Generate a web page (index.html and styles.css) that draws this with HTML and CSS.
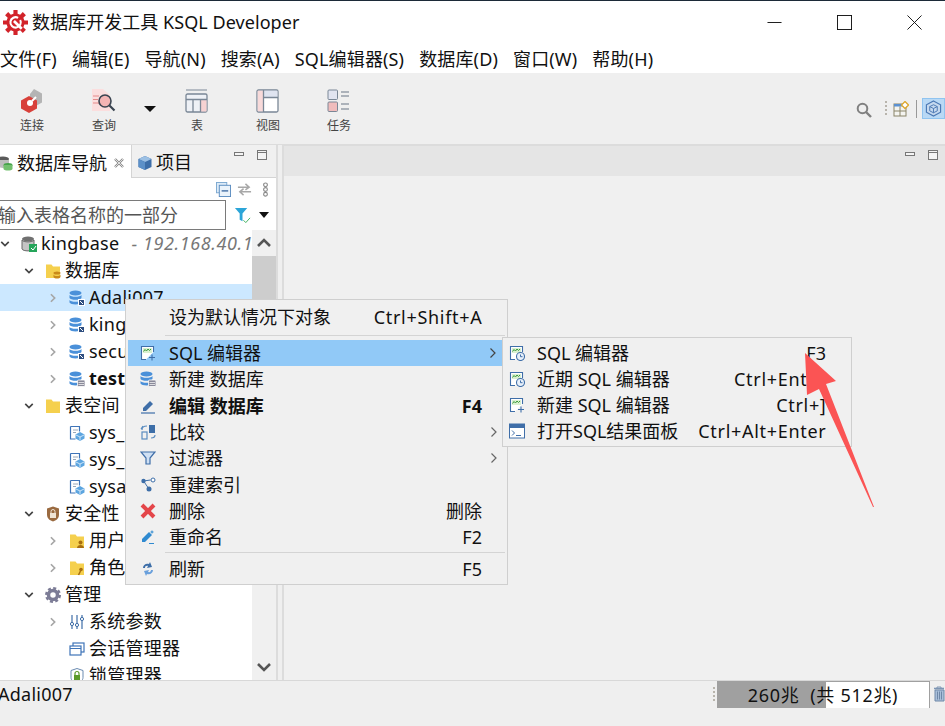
FILE: index.html
```html
<!DOCTYPE html>
<html lang="zh-CN">
<head>
<meta charset="utf-8">
<title>数据库开发工具 KSQL Developer</title>
<link rel="stylesheet" href="styles.css">
</head>
<body>
<svg class="defs" width="0" height="0" aria-hidden="true">
  <defs>
    <symbol id="db" viewBox="0 0 16 16">
      <ellipse cx="6.5" cy="3" rx="6" ry="2.4" fill="#4a90d9"/>
      <path d="M.5 5c1 2.4 11 2.4 12 0v3c-1 2.4-11 2.4-12 0z" fill="#4a90d9"/>
      <path d="M.5 10c1 2.4 11 2.4 12 0v2.5c-1 2.6-11 2.6-12 0z" fill="#4a90d9"/>
    </symbol>
    <symbol id="dbbadge" viewBox="0 0 16 16">
      <use href="#db"/>
      <rect x="9" y="9" width="7" height="7" fill="#fff"/>
      <path d="M10 10h5v5h-5z" fill="#2f4f80"/>
      <path d="M11 11l3 3" stroke="#fff" fill="none"/>
    </symbol>
    <symbol id="dbgray" viewBox="0 0 16 16">
      <use href="#db"/>
      <rect x="8.500" y="9" width="7.500" height="6.500" rx="1" fill="#8a8a9a" stroke="#fff" stroke-width=".8"/>
      <path d="M9.500 11.500h5.500M9.500 13.500h5.500" stroke="#fff" stroke-width=".7"/>
    </symbol>
    <symbol id="leaf" viewBox="0 0 16 16">
      <path d="M1.500 1.500h9v5M1.500 1.500v12.500h5" fill="#fff" stroke="#3f74b8" stroke-width="1.200"/>
      <path d="M4 5h5M4 7.500h3" stroke="#9aa8b8"/>
      <path d="M11 7l4.500 2.500v4L11 16l-4.500-2.500v-4z" fill="#5ca5e0"/>
      <path d="M7 10l4 2 4-2M11 12v3.500" stroke="#fff" stroke-width=".7" fill="none"/>
    </symbol>
    <symbol id="folder" viewBox="0 0 16 16">
      <path d="M1 1.500h5.500l1.500 2h7v11.500H1z" fill="#f5d04e"/>
    </symbol>
    <symbol id="chev-r" viewBox="0 0 12 12">
      <path d="M3.500 1.500L8 6l-4.500 4.500" fill="none" stroke="#a6a6a6" stroke-width="2"/>
    </symbol>
    <symbol id="chev-d" viewBox="0 0 12 12">
      <path d="M1.500 3.500L6 8l4.500-4.500" fill="none" stroke="#444" stroke-width="2"/>
    </symbol>
    <symbol id="sqlicon" viewBox="0 0 16 16">
      <path d="M6 14.500H1.500v-13h12V7" fill="#fff" stroke="#3f6ea8" stroke-width="1.100"/>
      <rect x="3" y="3" width="9" height="5" fill="#d9f0d0"/>
      <path d="M3.500 6.500l1.500-2 1.500 1.500 1.500-2 1.500 1.500 1.500-1.500" fill="none" stroke="#3c9a3c" stroke-width="1"/>
    </symbol>
    <symbol id="sqlplus" viewBox="0 0 16 16">
      <use href="#sqlicon"/>
      <path d="M9 12.500h6M12 9.500v6" stroke="#3f6ea8" stroke-width="1.100"/>
    </symbol>
    <symbol id="sqlclock" viewBox="0 0 16 16">
      <use href="#sqlicon"/>
      <circle cx="11.500" cy="11.500" r="4" fill="#e8f0fa" stroke="#3f6ea8" stroke-width="1.100"/>
      <path d="M11.500 9.500v2.200h2" fill="none" stroke="#3f6ea8"/>
    </symbol>
    <symbol id="min" viewBox="0 0 12 12">
      <rect x="1.500" y="3.500" width="9" height="3" fill="#f4f4f4" stroke="#777"/>
    </symbol>
    <symbol id="max" viewBox="0 0 12 12">
      <rect x="1.500" y="1.500" width="9" height="9" fill="#f4f4f4" stroke="#777"/>
      <path d="M1.500 3.500h9" stroke="#777"/>
    </symbol>
  </defs>
</svg>

<div class="app">
  <div class="topline"></div>

  <header class="titlebar">
    <svg class="logo" viewBox="0 0 24 24">
      <path d="M10 0h4v3.500l2.500 1 2.500-2.500 3 3-2.500 2.500 1 2.500H24v4h-3.500l-1 2.500 2.500 2.500-3 3-2.500-2.500-2.500 1V24h-4v-3.500l-2.500-1L5 22l-3-3 2.500-2.500-1-2.500H0v-4h3.500l1-2.500L2 5l3-3 2.500 2.500 2.500-1z" fill="#d2232a"/>
      <path d="M14.500 7.500a5 5 0 1 0 2 2" fill="none" stroke="#fff" stroke-width="2"/>
      <path d="M10.500 10.500L18 18" stroke="#fff" stroke-width="2.600"/>
    </svg>
    <span class="apptitle">数据库开发工具 KSQL Developer</span>
    <div class="winctl">
      <svg class="winbtn" viewBox="0 0 16 16"><path d="M.5 8h15" stroke="#111" stroke-width="1" fill="none"/></svg>
      <svg class="winbtn" viewBox="0 0 16 16"><rect x=".5" y=".5" width="15" height="15" fill="none" stroke="#111"/></svg>
      <svg class="winbtn" viewBox="0 0 16 16"><path d="M.5.500l15 15M15.500.500l-15 15" stroke="#111" fill="none"/></svg>
    </div>
  </header>

  <nav class="menubar">
    <span>文件(F)</span><span>编辑(E)</span><span>导航(N)</span><span>搜索(A)</span><span>SQL编辑器(S)</span><span>数据库(D)</span><span>窗口(W)</span><span>帮助(H)</span>
  </nav>

  <div class="toolbar">
    <div class="tool t-connect">
      <svg class="tico" viewBox="0 0 24 24">
        <path d="M14 0l8 4.500v9l-8 4.500-4-2V5z" fill="#b4b4b4"/>
        <path d="M9 7l8 4.500v8L9 24l-8-4.500v-8z" fill="#d8403a"/>
        <circle cx="10" cy="14" r="3" fill="#fff"/>
        <path d="M12 12l4-4" stroke="#fff" stroke-width="2"/>
      </svg>
      <span class="tlabel">连接</span>
    </div>
    <div class="tool t-query">
      <svg class="tico" viewBox="0 0 24 24">
        <path d="M0 0h11l7 6v16H0z" fill="#fbdede"/>
        <path d="M1 7h6M1 10.500h5M1 14h6" stroke="#e58a8a" stroke-width="1.200"/>
        <circle cx="13" cy="12" r="6" fill="#f4b4b4" stroke="#3a4450" stroke-width="1.600"/>
        <path d="M17.500 16.500L22.500 21.500" stroke="#3a4450" stroke-width="2.200"/>
      </svg>
      <span class="tlabel">查询</span>
    </div>
    <div class="tdrop"></div>
    <div class="tool t-table">
      <svg class="tico" viewBox="0 0 24 24">
        <path d="M1 1h21" stroke="#7a8796"/>
        <rect x="1" y="5" width="21" height="18" rx="1.500" fill="#eef1f6" stroke="#7a8796" stroke-width="1.300"/>
        <rect x="16" y="11" width="5.500" height="11.500" fill="#f6d2d2"/>
        <path d="M1 10.500h21M8 10.500V23M15.500 10.500V23" stroke="#7a8796" stroke-width="1.300"/>
      </svg>
      <span class="tlabel">表</span>
    </div>
    <div class="tool t-view">
      <svg class="tico" viewBox="0 0 24 24">
        <rect x="1" y="1" width="21" height="22" rx="1.500" fill="#fff" stroke="#7a8796" stroke-width="1.300"/>
        <rect x="1.700" y="1.700" width="5.500" height="20.600" fill="#f8dada"/>
        <rect x="8" y="1.700" width="13.400" height="6.500" fill="#dfe4f0"/>
        <path d="M7.500 1v22M8 8.500h14" stroke="#7a8796" stroke-width="1.300"/>
      </svg>
      <span class="tlabel">视图</span>
    </div>
    <div class="tool t-task">
      <svg class="tico" viewBox="0 0 24 24">
        <rect x="1" y="1" width="9.500" height="9.500" rx="1" fill="#e1e4f0" stroke="#7a8796"/>
        <rect x="1" y="13" width="9.500" height="9.500" rx="1" fill="#f0bcbc" stroke="#7a8796"/>
        <path d="M14 3h8M14 7h8M14 15h8M14 20h8" stroke="#6a7686" stroke-width="1.200"/>
      </svg>
      <span class="tlabel">任务</span>
    </div>
    <div class="tright">
      <svg class="ts" viewBox="0 0 16 16"><circle cx="6.500" cy="6.500" r="4.800" fill="none" stroke="#808080" stroke-width="2"/><path d="M10 10l5 5" stroke="#808080" stroke-width="2.400"/></svg>
      <div class="grip"></div>
      <svg class="ts2" viewBox="0 0 16 16"><rect x="1" y="3" width="12" height="12" fill="#f4f4f0" stroke="#8a8468"/><path d="M1 3h12v2.500H1z" fill="#5b90d0"/><path d="M7 5.500V15M1 10h12" stroke="#8a8468"/><path d="M12 .500l3.500 3.500-3.500 3.500L8.500 4z" fill="#fff" stroke="#dda72e" stroke-width="1.300"/></svg>
      <div class="tsep"></div>
      <div class="persp">
        <svg class="ts3" viewBox="0 0 18 18"><path d="M9 1l7.500 4v8L9 17l-7.500-4V5z" fill="#c4d8ee" stroke="#4a78b4" stroke-width="1.200"/><path d="M9 5l4 2v4.500L9 13.500l-4-2V7zM5 7l4 2 4-2M9 9v4.500" fill="none" stroke="#4a78b4"/></svg>
      </div>
    </div>
  </div>

  <div class="workarea">
    <section class="navpanel">
      <div class="tabs">
        <div class="tab active">
          <svg class="i16 tabdb" viewBox="0 0 16 16"><ellipse cx="6" cy="4" rx="6" ry="2.500" fill="#5a5a5a"/><path d="M0 5v6c1 2.500 11 2.500 12 0V5" fill="#bdbdbd"/><ellipse cx="11" cy="10" rx="4.500" ry="2" fill="#46a34a"/><path d="M6.500 10v4c1 2 8 2 9 0v-4" fill="#72c06e"/></svg>
          <span>数据库导航</span>
          <svg class="tabx" viewBox="0 0 10 10"><path d="M1 1l8 8M9 1l-8 8" stroke="#8a8a8a" stroke-width="2.400"/><path d="M1 1l8 8M9 1l-8 8" stroke="#f4f4f4" stroke-width=".8"/></svg>
        </div>
        <div class="tab inactive">
          <svg class="i16" viewBox="0 0 16 16"><path d="M8 1l6.500 3v8L8 15l-6.500-3V4z" fill="#3d6ea8"/><path d="M8 1l6.500 3L8 7 1.500 4z" fill="#9cc0e4"/><path d="M8 7v8L1.500 12V4z" fill="#5c90c8"/></svg>
          <span>项目</span>
          <div class="tabctl">
            <svg class="i12"><use href="#min"/></svg>
            <svg class="i12"><use href="#max"/></svg>
          </div>
        </div>
      </div>

      <div class="navbody">
        <div class="navactions">
          <svg class="i16" viewBox="0 0 16 16"><rect x=".5" y=".5" width="11" height="11" fill="#dcebf8" stroke="#7ba7d0"/><rect x="3.500" y="3.500" width="12" height="12" fill="#eaf3fb" stroke="#5a8cc0"/><path d="M6 9.500h7" stroke="#2a5a98" stroke-width="1.300"/></svg>
          <svg class="i16" viewBox="0 0 16 16"><path d="M1 5.500h11M9 2l4 3.500-4 3M15 10.500H4M7 7l-4 3.500 4 3.500" fill="none" stroke="#a8a8a8" stroke-width="1.600"/></svg>
          <svg class="i16" viewBox="0 0 16 16"><circle cx="8" cy="3" r="2" fill="#fff" stroke="#8a8a8a" stroke-width="1.200"/><circle cx="8" cy="8" r="2" fill="#fff" stroke="#8a8a8a" stroke-width="1.200"/><circle cx="8" cy="13" r="2" fill="#fff" stroke="#8a8a8a" stroke-width="1.200"/></svg>
        </div>
        <div class="filterrow">
          <div class="filterinput">输入表格名称的一部分</div>
          <svg class="fico" viewBox="0 0 18 18"><path d="M1 1h13l-5 6v8l-3-1.500V7z" fill="#2ca5d8"/><path d="M10 14l2.500 2.500L17 11.500" fill="none" stroke="#3dae5a"/></svg>
          <div class="fdrop"></div>
        </div>

        <div class="treewrap">
          <div class="tree">
            <div class="row l0"><svg class="chev"><use href="#chev-d"/></svg><svg class="i16" viewBox="0 0 16 16"><ellipse cx="7" cy="3" rx="6" ry="2.500" fill="#707070"/><path d="M1 4v9c1 2.500 11 2.500 12 0V4c-1 2.500-11 2.500-12 0z" fill="#c4c4c4" stroke="#666"/><rect x="8" y="8" width="8" height="8" fill="#25a55a"/><path d="M10 12l2 2 3-4" stroke="#fff" fill="none"/></svg><span>kingbase</span><em class="host">- 192.168.40.111:54321</em></div>
            <div class="row l1"><svg class="chev"><use href="#chev-d"/></svg><svg class="i16" viewBox="0 0 16 16"><use href="#folder"/><ellipse cx="12" cy="10" rx="3.500" ry="1.500" fill="#c98a1a"/><path d="M8.500 11.500c1 2 6 2 7 0v2.500c-1 2-6 2-7 0z" fill="#c98a1a"/></svg><span>数据库</span></div>
            <div class="row l2 selected"><svg class="chev"><use href="#chev-r"/></svg><svg class="i16"><use href="#dbbadge"/></svg><span>Adali007</span></div>
            <div class="row l2"><svg class="chev"><use href="#chev-r"/></svg><svg class="i16"><use href="#dbbadge"/></svg><span>kingbase</span></div>
            <div class="row l2"><svg class="chev"><use href="#chev-r"/></svg><svg class="i16"><use href="#dbbadge"/></svg><span>security</span></div>
            <div class="row l2"><svg class="chev"><use href="#chev-r"/></svg><svg class="i16"><use href="#dbgray"/></svg><strong>test</strong></div>
            <div class="row l1"><svg class="chev"><use href="#chev-d"/></svg><svg class="i16"><use href="#folder"/></svg><span>表空间</span></div>
            <div class="row l2"><span class="nochev"></span><svg class="i16"><use href="#leaf"/></svg><span>sys_global</span></div>
            <div class="row l2"><span class="nochev"></span><svg class="i16"><use href="#leaf"/></svg><span>sys_default</span></div>
            <div class="row l2"><span class="nochev"></span><svg class="i16"><use href="#leaf"/></svg><span>sysaudit</span></div>
            <div class="row l1"><svg class="chev"><use href="#chev-d"/></svg><svg class="i16" viewBox="0 0 16 16"><path d="M8 .500l6 2v6c0 4-3 6-6 7-3-1-6-3-6-7v-6z" fill="#9a6a40"/><rect x="5" y="7" width="6" height="5" fill="#f0e4d4"/><path d="M6 7V5.500a2 2 0 0 1 4 0V7" fill="none" stroke="#f0e4d4"/></svg><span>安全性</span></div>
            <div class="row l2"><svg class="chev"><use href="#chev-r"/></svg><svg class="i16" viewBox="0 0 16 16"><use href="#folder"/><circle cx="11.500" cy="9.500" r="2" fill="#a86e10"/><path d="M8 15c0-4 7-4 7 0z" fill="#a86e10"/></svg><span>用户</span></div>
            <div class="row l2"><svg class="chev"><use href="#chev-r"/></svg><svg class="i16" viewBox="0 0 16 16"><use href="#folder"/><circle cx="12" cy="9.500" r="1.800" fill="#a86e10"/><path d="M11.500 11l-2 4" stroke="#a86e10" stroke-width="1.500"/></svg><span>角色</span></div>
            <div class="row l1"><svg class="chev"><use href="#chev-d"/></svg><svg class="i16" viewBox="0 0 16 16"><circle cx="8" cy="8" r="6.800" fill="none" stroke="#7c7c96" stroke-width="2.400" stroke-dasharray="3 2.340"/><circle cx="8" cy="8" r="4.500" fill="none" stroke="#7c7c96" stroke-width="3.500"/></svg><span>管理</span></div>
            <div class="row l2"><svg class="chev"><use href="#chev-r"/></svg><svg class="i16" viewBox="0 0 16 16"><path d="M3 1v14M8 1v14M13 1v14" stroke="#3f6ea8" stroke-width="1.200"/><circle cx="3" cy="10" r="1.600" fill="#fff" stroke="#3f6ea8"/><circle cx="8" cy="11" r="1.600" fill="#fff" stroke="#3f6ea8"/><circle cx="13" cy="5" r="1.600" fill="#fff" stroke="#3f6ea8"/></svg><span>系统参数</span></div>
            <div class="row l2"><span class="nochev"></span><svg class="i16" viewBox="0 0 16 16"><rect x="4" y="2" width="11" height="9" fill="none" stroke="#3f74b8" stroke-width="1.200"/><rect x="1" y="5" width="11" height="9" fill="#fff" stroke="#3f74b8" stroke-width="1.200"/><path d="M1 7.500h11" stroke="#3f74b8"/></svg><span>会话管理器</span></div>
            <div class="row l2"><span class="nochev"></span><svg class="i16" viewBox="0 0 16 16"><path d="M8 .500l6 2v7c0 3-3 5-6 6-3-1-6-3-6-6v-7z" fill="#fff" stroke="#6a8ab0"/><rect x="5" y="7" width="6" height="6" fill="#5c9a2a"/><path d="M6 7V5.500a2 2 0 0 1 4 0V7" fill="none" stroke="#5c9a2a" stroke-width="1.200"/></svg><span>锁管理器</span></div>
          </div>
          <div class="scrollbar">
            <svg class="sbtn" viewBox="0 0 24 26"><path d="M6 16l6-6 6 6" fill="none" stroke="#555" stroke-width="2.600"/></svg>
            <div class="thumb"></div>
            <svg class="sbtn sdown" viewBox="0 0 24 26"><path d="M6 10l6 6 6-6" fill="none" stroke="#555" stroke-width="2.600"/></svg>
          </div>
        </div>
      </div>
    </section>

    <section class="editorpanel">
      <div class="edhead">
        <svg class="i12"><use href="#min"/></svg>
        <svg class="i12"><use href="#max"/></svg>
      </div>
    </section>
  </div>

  <footer class="statusbar">
    <span class="stext">Adali007</span>
    <div class="grip sgrip"></div>
    <div class="heap"><div class="heapused"></div><span class="heaptext">260兆&nbsp;&nbsp;(共 512兆)</span></div>
    <svg class="trash" viewBox="0 0 12 16"><path d="M1 2.500h10" stroke="#7e96b4" stroke-width="1.600"/><path d="M4 2.500V1h4v1.500" stroke="#7e96b4" fill="none"/><path d="M2 4h9v11H2z" fill="#a9bfda" stroke="#6f88a8"/><path d="M4.500 5.500v8M6.500 5.500v8M8.500 5.500v8" stroke="#6f88a8"/></svg>
  </footer>

  <div class="menu mainmenu">
    <div class="mi first"><span class="mic"></span><span class="ml">设为默认情况下对象</span><span class="ms key">Ctrl+Shift+A</span><span class="ma"></span></div>
    <div class="msep"></div>
    <div class="mi hot"><span class="mic"><svg class="i16"><use href="#sqlplus"/></svg></span><span class="ml">SQL 编辑器</span><span class="ms"></span><span class="ma"><svg class="i10" viewBox="0 0 10 12"><path d="M2.500 1.500L7 6l-4.500 4.500" fill="none" stroke="#444" stroke-width="1.200"/></svg></span></div>
    <div class="mi"><span class="mic"><svg class="i16"><use href="#dbgray"/></svg></span><span class="ml">新建 数据库</span><span class="ms"></span><span class="ma"></span></div>
    <div class="mi bold"><span class="mic"><svg class="i16" viewBox="0 0 16 16"><path d="M3 10l7-7 3 3-7 7H3z" fill="#3f6ea8"/><path d="M1 15h14" stroke="#3f6ea8" stroke-width="1.200"/></svg></span><span class="ml">编辑 数据库</span><span class="ms">F4</span><span class="ma"></span></div>
    <div class="mi"><span class="mic"><svg class="i16" viewBox="0 0 16 16"><rect x="9" y="1" width="6" height="8" fill="#3d6ea8"/><rect x="2" y="8" width="5" height="7" fill="none" stroke="#5a8cc0" stroke-width="1.200"/><path d="M2 6c0-3 2-4 5-4M3 2L1 5M15 11c0 2-2 3-4 3" fill="none" stroke="#5a8cc0" stroke-width="1.200"/></svg></span><span class="ml">比较</span><span class="ms"></span><span class="ma"><svg class="i10" viewBox="0 0 10 12"><path d="M2.500 1.500L7 6l-4.500 4.500" fill="none" stroke="#666" stroke-width="1.200"/></svg></span></div>
    <div class="mi"><span class="mic"><svg class="i16" viewBox="0 0 16 16"><path d="M1 2h14L10 8v6H6V8z" fill="#cfe0f4" stroke="#3f6ea8" stroke-width="1.200"/></svg></span><span class="ml">过滤器</span><span class="ms"></span><span class="ma"><svg class="i10" viewBox="0 0 10 12"><path d="M2.500 1.500L7 6l-4.500 4.500" fill="none" stroke="#666" stroke-width="1.200"/></svg></span></div>
    <div class="mi"><span class="mic"><svg class="i16" viewBox="0 0 16 16"><circle cx="3.500" cy="4" r="2.200" fill="#3d6ea8"/><circle cx="9" cy="12" r="2.500" fill="#3d6ea8"/><circle cx="13" cy="3" r="2" fill="#fff" stroke="#3d6ea8"/><path d="M3.500 4l7-1M3.500 4l5.500 8" fill="none" stroke="#3d6ea8"/></svg></span><span class="ml">重建索引</span><span class="ms"></span><span class="ma"></span></div>
    <div class="mi"><span class="mic"><svg class="i16" viewBox="0 0 16 16"><path d="M2 2l12 12M14 2L2 14" stroke="#e4464a" stroke-width="4"/></svg></span><span class="ml">删除</span><span class="ms">删除</span><span class="ma"></span></div>
    <div class="mi"><span class="mic"><svg class="i16" viewBox="0 0 16 16"><path d="M2 10l7-7 3 3-7 7H2z" fill="#2f8ad0"/><path d="M12 1.500v3M10.500 3h3" stroke="#2f8ad0"/><path d="M9 14.500h5" stroke="#2f8ad0"/></svg></span><span class="ml">重命名</span><span class="ms">F2</span><span class="ma"></span></div>
    <div class="msep last"></div>
    <div class="mi"><span class="mic"><svg class="i16" viewBox="0 0 16 16"><path d="M3 7c0-3 3-5 6-4l1-2 2 5-5 1 1-2c-2-.5-3 .5-3 2z" fill="#3d6ea8"/><path d="M13 9c0 3-3 5-6 4l-1 2-2-5 5-1-1 2c2 .5 3-.5 3-2z" fill="#6aa0dc"/></svg></span><span class="ml">刷新</span><span class="ms">F5</span><span class="ma"></span></div>
  </div>

  <div class="menu submenu">
    <div class="si"><span class="sic"><svg class="i16"><use href="#sqlclock"/></svg></span><span class="ml">SQL 编辑器</span><span class="ms">F3</span></div>
    <div class="si"><span class="sic"><svg class="i16"><use href="#sqlclock"/></svg></span><span class="ml">近期 SQL 编辑器</span><span class="ms key">Ctrl+Enter</span></div>
    <div class="si"><span class="sic"><svg class="i16"><use href="#sqlplus"/></svg></span><span class="ml">新建 SQL 编辑器</span><span class="ms key">Ctrl+]</span></div>
    <div class="si"><span class="sic"><svg class="i16" viewBox="0 0 16 16"><rect x=".5" y="1" width="15" height="14" fill="#fff" stroke="#3f6ea8"/><rect x=".5" y="1" width="15" height="4" fill="#3f6ea8"/><path d="M3 7.500l2.500 2.500L3 12.500M7 12.500h5" fill="none" stroke="#3f6ea8"/></svg></span><span class="ml">打开SQL结果面板</span><span class="ms key">Ctrl+Alt+Enter</span></div>
  </div>

  <svg class="arrow" viewBox="0 0 80 165"><path d="M0 3L31 31 21 34 69 157 68 157 14 39 2 45z" fill="#fb5454"/></svg>
</div>
</body>
</html>
```

FILE: styles.css
```css
* { box-sizing: border-box; }
html, body { margin: 0; padding: 0; }
body {
  width: 945px;
  height: 726px;
  overflow: hidden;
  font-family: "Noto Sans", "Noto Sans CJK SC", sans-serif;
  font-size: 18px;
  color: #111;
  background: #efefef;
}
.defs { position: absolute; }
svg { display: block; flex: none; }
.i16 { width: 16px; height: 16px; }
.i12 { width: 12px; height: 12px; }
.i10 { width: 10px; height: 12px; }

.app {
  position: relative;
  width: 945px;
  height: 726px;
  display: flex;
  flex-direction: column;
  overflow: hidden;
}
.topline { height: 1px; background: #1c2a38; flex: none; }

.titlebar {
  height: 44px;
  flex: none;
  background: #fff;
  display: flex;
  align-items: center;
  padding: 0 0 2px 3px;
}
.logo { width: 25px; height: 25px; margin-right: 4px; }
.apptitle { line-height: 42px; letter-spacing: .05px; }
.winctl { margin-left: auto; display: flex; gap: 55px; padding-right: 23px; }
.winbtn { width: 15px; height: 15px; }

.menubar {
  height: 28px;
  flex: none;
  background: #fff;
  display: flex;
  gap: 15px;
  letter-spacing: .15px;
  line-height: 28px;
  white-space: nowrap;
}

.toolbar {
  height: 72px;
  flex: none;
  background: #efefef;
  display: flex;
  border-bottom: 1px solid #dcdcdc;
}
.tool {
  width: 60px;
  display: flex;
  flex-direction: column;
  align-items: center;
  padding-top: 16px;
  gap: 5px;
}
.tico { width: 24px; height: 24px; }
.tlabel { font-size: 12px; line-height: 16px; color: #444; }
.t-connect { margin-left: 2px; }
.t-query { margin-left: 12px; }
.tdrop {
  width: 0; height: 0;
  margin: 33px 0 0 10px;
  border-left: 6px solid transparent;
  border-right: 6px solid transparent;
  border-top: 6px solid #111;
}
.t-table { margin-left: 11px; }
.t-view { margin-left: 11px; }
.t-task { margin-left: 11px; }

.tright { margin-left: auto; display: flex; align-items: center; padding-top: 1px; padding-bottom: 1px; }
.ts { width: 16px; height: 16px; margin-right: 13px; margin-top: 2px; }
.grip {
  width: 2px; height: 15px;
  background: repeating-linear-gradient(#b8b4ac 0 2px, transparent 2px 4px);
  margin-right: 6px;
}
.ts2 { width: 16px; height: 16px; margin-right: 7px; }
.tsep { width: 1px; height: 18px; background: #999; margin-right: 5px; }
.persp {
  width: 23px; height: 21px;
  background: #b9d9f5;
  border: 1px solid #90c4f0;
  display: flex; align-items: center; justify-content: center;
}
.ts3 { width: 17px; height: 17px; }

.workarea { flex: 1; display: flex; min-height: 0; }

.navpanel { width: 278px; flex: none; display: flex; flex-direction: column; border-right: 2px solid #dcdcdc; }
.tabs { height: 33px; flex: none; display: flex; background: #f0f0f0; }
.tab { display: flex; align-items: center; line-height: 33px; white-space: nowrap; padding-top: 3px; }
.tab.active { width: 132px; background: #fff; border-right: 1px solid #d4d4d4; }
.tabdb { margin-left: -3px; margin-right: 4px; }
.tabx { width: 10px; height: 10px; margin-left: 7px; }
.tab.inactive { flex: 1; border-bottom: 1px solid #d4d4d4; padding-left: 5px; }
.tab.inactive span { margin-left: 3px; }
.tabctl { margin-left: auto; display: flex; gap: 11px; padding-right: 8px; align-self: flex-start; padding-top: 1px; height: 18px; }

.navbody { flex: 1; min-height: 0; background: #fff; display: flex; flex-direction: column; }
.navactions { height: 22px; flex: none; display: flex; justify-content: flex-end; gap: 6px; padding-right: 3px; align-items: center; }
.navactions .i16 { width: 15px; height: 15px; }
.filterrow { height: 30px; flex: none; display: flex; align-items: center; }
.filterinput {
  width: 231px; height: 30px; flex: none;
  margin-left: -5px; padding-left: 2px;
  border: 1px solid #7a7a7a;
  color: #555;
  line-height: 28px;
  white-space: nowrap;
  overflow: hidden;
}
.fico { width: 17px; height: 17px; margin-left: 8px; }
.fdrop {
  width: 0; height: 0;
  margin-left: 8px;
  border-left: 5.500px solid transparent;
  border-right: 5.500px solid transparent;
  border-top: 6px solid #111;
}

.treewrap { flex: 1; min-height: 0; display: flex; }
.tree { width: 252px; flex: none; overflow: hidden; }
.row {
  height: 27px;
  display: flex;
  align-items: center;
  white-space: nowrap;
  line-height: 27px;
  overflow: hidden;
  letter-spacing: .25px;
}
.row.selected { background: #cce8ff; }
.l0 { padding-left: 0; }
.l1 { padding-left: 24px; }
.l2 { padding-left: 48px; }
.chev, .nochev { width: 10px; height: 12px; flex: none; margin-right: 11px; }
.row > .i16 { margin-right: 4px; }
.host { color: #777; font-style: italic; margin-left: 12px; letter-spacing: .6px; }

.scrollbar { width: 24px; flex: none; background: #f0f0f0; display: flex; flex-direction: column; }
.sbtn { width: 24px; height: 26px; flex: none; }
.thumb { height: 244px; background: #cdcdcd; flex: none; }
.sdown { margin-top: auto; }

.editorpanel { flex: 1; margin-left: 4px; border-left: 2px solid #dcdcdc; border-top: 1px solid #dcdcdc; background: #f0f0f0; }
.edhead {
  height: 30px;
  background: #e5e5e5;
  display: flex;
  justify-content: flex-end;
  gap: 11px;
  padding: 3px 6px 0 0;
}

.statusbar {
  height: 46px;
  flex: none;
  background: #efefef;
  border-top: 1px solid #d8d8d8;
  display: flex;
  align-items: flex-start;
}
.stext { margin-left: -2px; line-height: 24px; padding-top: 1px; letter-spacing: .25px; }
.sgrip { margin-left: auto; margin-right: 2px; margin-top: 6px; }
.heap {
  position: relative;
  width: 213px; height: 27px;
  background: #fff;
  border-top: 1px solid #a0a0a0;
  border-right: 1px solid #a0a0a0;
  text-align: center;
  line-height: 26px;
}
.heapused { position: absolute; left: 0; top: 0; bottom: 0; width: 109px; background: #a0a0a0; }
.heaptext { position: relative; letter-spacing: .7px; }
.trash { width: 12px; height: 16px; margin: 5px 0 0 3px; }

.menu {
  position: absolute;
  background: #f0f0f0;
  border: 1px solid #cfcfcf;
  white-space: nowrap;
}
.mainmenu { left: 125px; top: 299px; width: 383px; height: 286px; padding: 2px; }
.mi { height: 26.300px; display: flex; align-items: center; line-height: 26px; }
.mi.first { height: 31px; padding-bottom: 2px; }
.mi.hot { background: #91c9f7; width: 376px; }
.mi.bold { font-weight: 700; }
.mic { width: 41px; flex: none; display: flex; justify-content: flex-start; padding-left: 12px; }
.ml { flex: 1; }
.ms { margin-right: 3px; }
.key { letter-spacing: .7px; margin-right: 2.500px; }
.ma { width: 20px; flex: none; padding-left: 4px; }
.msep { height: 1px; background: #d4d4d4; margin: 2px 0 3px 37px; }
.msep.last { margin: 2px 0 2px 37px; }
.mi.first + .msep { margin-top: 2px; margin-bottom: 4px; }

.submenu { left: 502px; top: 337px; width: 350px; height: 110px; padding: 2px; }
.si { height: 26px; display: flex; align-items: center; line-height: 26px; }
.sic { width: 32px; flex: none; padding-left: 4px; }
.submenu .ms { margin-right: 23px; }
.submenu .key { margin-right: 22.500px; }

.arrow { position: absolute; left: 805px; top: 350px; width: 80px; height: 165px; }
```
